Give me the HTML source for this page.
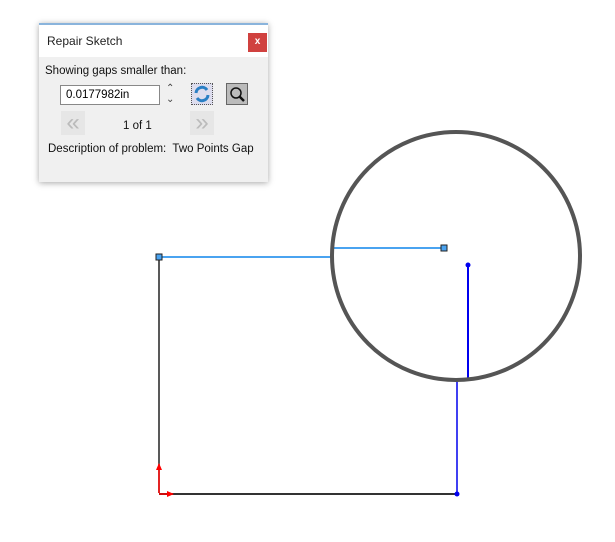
<!DOCTYPE html><html><head><style>
body{margin:0;width:615px;height:542px;background:#fff;position:relative;overflow:hidden;font-family:"Liberation Sans",sans-serif}
.dlg{position:absolute;left:39px;top:23px;width:229px;height:157px;background:#f0f0f0;border-top:2px solid #8ab4dc;box-shadow:0 1px 6px rgba(0,0,0,.35)}
.tb{height:32px;background:#fff;position:relative}
.t{position:absolute;left:8px;top:9px;font-size:12px;color:#222}
.x{position:absolute;left:209px;top:8px;width:19px;height:19px;background:#d0413f;color:#fff;font-size:10px;text-align:center;line-height:18px;font-weight:bold}
.s{position:absolute;font-size:11.5px;color:#111}
.in{position:absolute;left:21px;top:60px;background:#fff;border:1px solid #888;font-size:11.5px;line-height:18px;padding-left:5px;box-sizing:border-box;width:100px;height:20px}
.b{position:absolute;width:22px;height:22px;box-sizing:border-box}
.ar{position:absolute;top:86px;font-size:24px;line-height:24px;color:#bbb;background:#e6e6e6;width:24px;height:24px;text-align:center}
</style></head><body>
<svg width="615" height="542" style="position:absolute;left:0;top:0">
<line x1="159" y1="257" x2="332" y2="257" stroke="#4aa3f0" stroke-width="2"/>
<line x1="332" y1="248" x2="444" y2="248" stroke="#4aa3f0" stroke-width="2"/>
<line x1="159" y1="257" x2="159" y2="493" stroke="#222" stroke-width="1.5"/>
<line x1="159" y1="494" x2="457" y2="494" stroke="#333" stroke-width="2"/>
<line x1="457" y1="380" x2="457" y2="494" stroke="#0000ee" stroke-width="1.5"/>
<line x1="468" y1="265" x2="468" y2="378" stroke="#0000ee" stroke-width="2"/>
<circle cx="468" cy="265" r="2.5" fill="#0000ee"/>
<circle cx="457" cy="494" r="2.5" fill="#0000ee"/>
<circle cx="456" cy="256" r="124" fill="none" stroke="#555" stroke-width="4"/>
<rect x="156" y="254" width="6" height="6" fill="#4aa3f0" stroke="#222"/>
<rect x="441" y="245" width="6" height="6" fill="#4aa3f0" stroke="#222"/>
<line x1="159" y1="493" x2="159" y2="464" stroke="red" stroke-width="1.5"/><polygon points="156,470 162,470 159,463" fill="red"/>
<line x1="159" y1="494" x2="173" y2="494" stroke="red" stroke-width="1.5"/><polygon points="167,491 167,497 174,494" fill="red"/>
</svg>
<div class="dlg">
<div class="tb"><div class="t">Repair Sketch</div><div class="x">x</div></div>
<div class="s" style="left:6px;top:40px">Showing gaps smaller than:</div>
<div class="in">0.0177982in</div>
<div class="s" style="left:127px;top:58px;font-size:10px;line-height:11px;color:#444">⌃<br>⌄</div>
<div class="b" style="left:152px;top:58px;border:1px dotted #555;background:#dde"><svg width="20" height="20"><path d="M4 9a6 6 0 0 1 11-3M16 11a6 6 0 0 1-11 3" stroke="#2a7fc4" stroke-width="3" fill="none"/></svg></div>
<div class="b" style="left:187px;top:58px;border:1px solid #666;background:#bbb"><svg width="20" height="20"><circle cx="9" cy="9" r="5" stroke="#111" stroke-width="1.5" fill="none"/><line x1="12.5" y1="12.5" x2="17" y2="17" stroke="#111" stroke-width="2.5"/></svg></div>
<div class="ar" style="left:22px">«</div>
<div class="s" style="left:84px;top:95px">1 of 1</div>
<div class="ar" style="left:151px">»</div>
<div class="s" style="left:9px;top:118px">Description of problem:&nbsp; Two Points Gap</div>
</div>
</body></html>
